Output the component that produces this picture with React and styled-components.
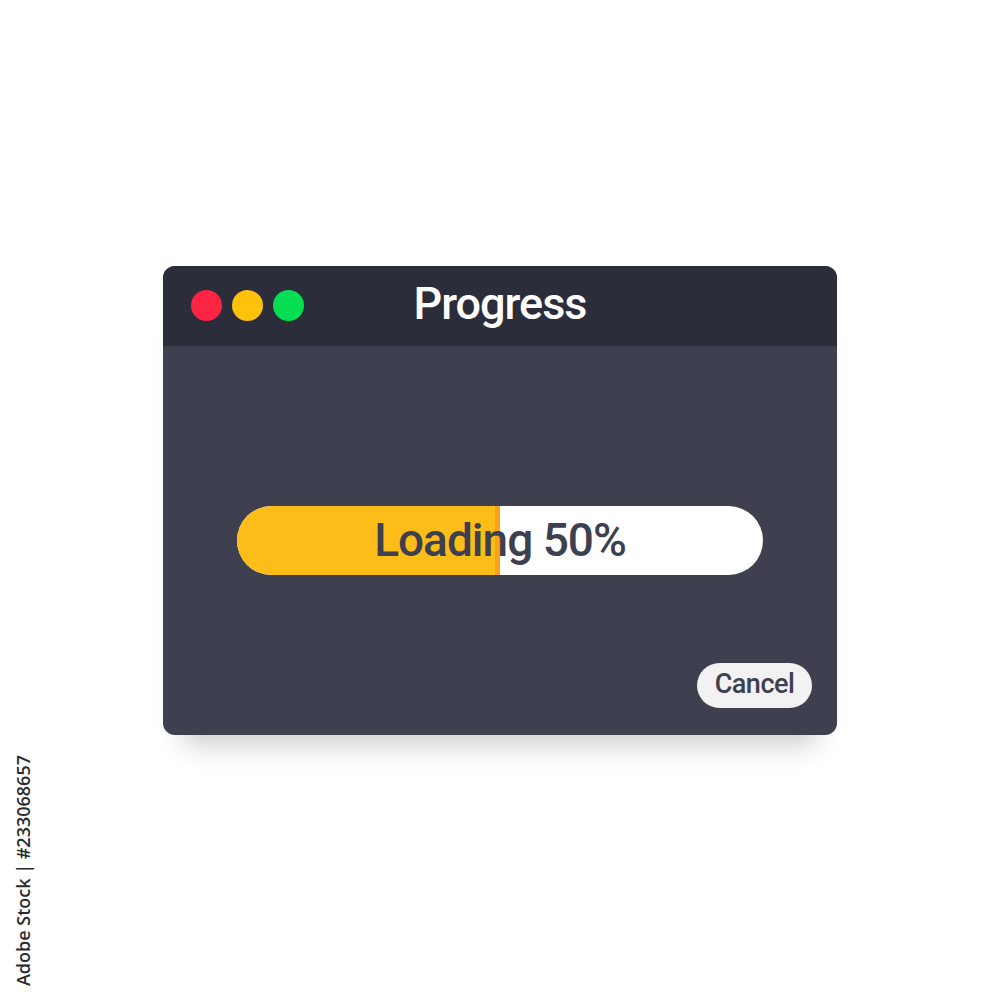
import React from "react";
import styled, { createGlobalStyle } from "styled-components";

const GlobalStyle = createGlobalStyle`
  html, body {
    margin: 0;
    padding: 0;
    background: #ffffff;
  }
  * {
    box-sizing: border-box;
  }
`;

const Page = styled.div`
  position: relative;
  width: 1000px;
  height: 1000px;
  display: flex;
  align-items: center;
  justify-content: center;
  font-family: Roboto, "Liberation Sans", sans-serif;
`;

const Window = styled.section`
  width: 674px;
  height: 469px;
  display: flex;
  flex-direction: column;
  border-radius: 12px;
  overflow: hidden;
  background: #3e3f4f;
  box-shadow: 0 30px 26px -20px rgba(0, 0, 0, 0.2);
`;

const TitleBar = styled.header`
  position: relative;
  height: 80px;
  flex-shrink: 0;
  display: flex;
  align-items: center;
  justify-content: center;
  background: #2c2d3b;
`;

const Lights = styled.div`
  position: absolute;
  left: 28px;
  top: 24px;
  display: flex;
  gap: 10px;
`;

const Light = styled.span`
  width: 31px;
  height: 31px;
  border-radius: 50%;
  background: ${(p) => p.$color};
`;

const Title = styled.h1`
  margin: 0;
  padding-bottom: 5px;
  color: #ffffff;
  font-size: 45px;
  font-weight: 500;
  letter-spacing: -1px;
`;

const Body = styled.div`
  flex: 1;
  display: flex;
  flex-direction: column;
  padding: 160px 25px 27px 74px;
`;

const Track = styled.div`
  position: relative;
  width: 526px;
  height: 69px;
  border-radius: 35px;
  overflow: hidden;
  background: #ffffff;
  display: flex;
  align-items: center;
  justify-content: center;
`;

const Fill = styled.div`
  position: absolute;
  left: 0;
  top: 0;
  bottom: 0;
  background: #fdbd18;
  border-right: 5px solid #f9a11b;
`;

const Label = styled.span`
  position: relative;
  color: #3e3f4f;
  font-size: 46px;
  font-weight: 500;
  letter-spacing: -1px;
`;

const Footer = styled.div`
  margin-top: auto;
  display: flex;
  justify-content: flex-end;
`;

const CancelButton = styled.button`
  width: 115px;
  height: 45px;
  border: none;
  border-radius: 23px;
  background: #f2f2f2;
  color: #3e3f4f;
  font-family: inherit;
  font-size: 27px;
  font-weight: 500;
  letter-spacing: -0.5px;
  padding: 0 0 2px;
`;

const SideCaption = styled.div`
  position: absolute;
  left: 11px;
  bottom: 14px;
  writing-mode: vertical-rl;
  transform: rotate(180deg);
  color: #2b2b2b;
  font-family: "Open Sans", sans-serif;
  font-size: 18px;
  font-weight: 600;
  white-space: nowrap;
`;

export default function App() {
  const progress = 50;
  return (
    <>
      <GlobalStyle />
      <Page>
        <Window>
          <TitleBar>
            <Lights>
              <Light $color="#fb2443" />
              <Light $color="#fec20c" />
              <Light $color="#05dd52" />
            </Lights>
            <Title>Progress</Title>
          </TitleBar>
          <Body>
            <Track>
              <Fill style={{ width: `${progress}%` }} />
              <Label>Loading {progress}%</Label>
            </Track>
            <Footer>
              <CancelButton>Cancel</CancelButton>
            </Footer>
          </Body>
        </Window>
        <SideCaption>Adobe Stock | #233068657</SideCaption>
      </Page>
    </>
  );
}
